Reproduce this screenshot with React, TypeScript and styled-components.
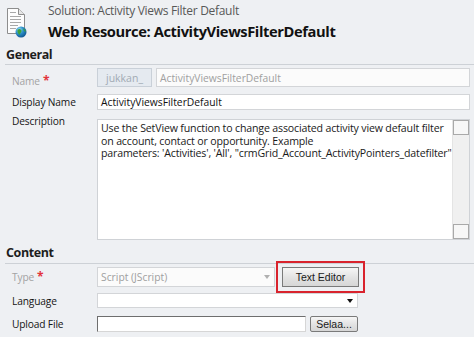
import React from "react";
import styled, { createGlobalStyle } from "styled-components";

const GlobalStyle = createGlobalStyle`
  html, body { margin: 0; padding: 0; background: #eef0f3; }
  body { font-family: "Open Sans", "Noto Sans", sans-serif; color: #222; }
  * { box-sizing: border-box; }
`;

const Page = styled.div`
  width: 474px;
  height: 337px;
  overflow: hidden;
  background: #eef0f3;
`;

const Header = styled.header`
  display: flex;
  align-items: flex-start;
  gap: 20px;
  height: 44px;
  padding: 8px 0 0 6px;
`;

const TitleBlock = styled.div`
  display: flex;
  flex-direction: column;
  margin-top: -5px;
`;

const Subtitle = styled.div`
  font-size: 12px;
  line-height: 16px;
  color: #585858;
  letter-spacing: -0.3px;
`;

const Title = styled.div`
  margin-top: 2px;
  font-size: 14.7px;
  line-height: 20px;
  font-weight: 700;
  color: #111;
  letter-spacing: -0.4px;
`;

const SectionTitle = styled.div<{ $h: number; $pt: number }>`
  height: ${(p) => p.$h}px;
  margin-left: 5px;
  padding: ${(p) => p.$pt}px 0 0 1px;
  border-bottom: 1px solid #cdd1d6;
  font-size: 12.5px;
  line-height: 14px;
  font-weight: 700;
  color: #1e1e1e;
  letter-spacing: -0.4px;
`;

const Row = styled.div<{ $h: number; $mt: number }>`
  display: grid;
  grid-template-columns: 85px 1fr;
  align-items: center;
  height: ${(p) => p.$h}px;
  margin-top: ${(p) => p.$mt}px;
  padding: 0 4px 0 12px;
`;

const Label = styled.div<{ $disabled?: boolean; $align?: string; $mt?: number }>`
  align-self: ${(p) => p.$align || "center"};
  margin-top: ${(p) => p.$mt || 0}px;
  font-size: 10.2px;
  line-height: 12px;
  color: ${(p) => (p.$disabled ? "#a3a3a3" : "#141414")};
  white-space: nowrap;
  letter-spacing: -0.15px;
`;

const Req = styled.span`
  color: #e2343b;
  font-weight: 700;
  margin-left: 3px;
  font-size: 12px;
`;

const Controls = styled.div`
  display: flex;
  align-items: center;
  height: 100%;
`;

const Prefix = styled.div`
  width: 55px;
  height: 100%;
  display: flex;
  align-items: center;
  justify-content: center;
  background: #e5eaf0;
  border: 1px solid #c9d0d8;
  color: #a2aab4;
  font-size: 10.5px;
`;

const Field = styled.div<{ $disabled?: boolean; $w?: number; $ml?: number }>`
  ${(p) => (p.$w ? `width: ${p.$w}px;` : "flex: 1;")}
  margin-left: ${(p) => p.$ml || 0}px;
  height: 100%;
  display: flex;
  align-items: center;
  padding: 0 4px 0 3px;
  background: ${(p) => (p.$disabled ? "#fbfbfb" : "#fff")};
  border: 1px solid #d3d5d8;
  color: ${(p) => (p.$disabled ? "#a0a0a0" : "#111")};
  font-size: 10.3px;
  white-space: nowrap;
  overflow: hidden;
`;

const FieldText = styled.span`
  flex: 1;
`;

const Arrow = styled.span<{ $color: string }>`
  width: 0;
  height: 0;
  border-left: 3px solid transparent;
  border-right: 3px solid transparent;
  border-top: 4px solid ${(p) => p.$color};
`;

const FileField = styled.div`
  width: 209px;
  height: 100%;
  background: #fff;
  border: 1px solid #d6d6d6;
  border-top-color: #6e6e6e;
  border-left-color: #6e6e6e;
`;

const TextArea = styled.div`
  flex: 1;
  height: 100%;
  display: flex;
  background: #fff;
  border: 1px solid #cfd2d6;
`;

const AreaText = styled.div`
  flex: 1;
  min-width: 0;
  padding: 2px 0 0 3px;
  font-size: 10.6px;
  line-height: 12.5px;
  color: #1a1a1a;
  white-space: pre;
  overflow: hidden;
  letter-spacing: -0.16px;
`;

const ScrollTrack = styled.div`
  width: 17px;
  flex-shrink: 0;
  display: flex;
  flex-direction: column;
  justify-content: space-between;
  background: #f0f0f0;
  border-left: 1px solid #e4e4e4;
`;

const ScrollBtn = styled.div`
  width: 16px;
  height: 15px;
  background: #f7f7f7;
  border: 1px solid #a9a9a9;
`;

const Button = styled.button<{ $w: number; $h: number; $ml: number; $highlight?: boolean }>`
  width: ${(p) => p.$w}px;
  height: ${(p) => p.$h}px;
  margin-left: ${(p) => p.$ml}px;
  padding: 0;
  background: linear-gradient(#f6f6f6, #e2e2e2 55%, #d6d6d6);
  border: 1px solid #7a7a7a;
  border-radius: ${(p) => (p.$highlight ? 0 : 2)}px;
  font-family: "Liberation Sans", Arial, sans-serif;
  font-size: 10.5px;
  color: #1a1a1a;
  ${(p) => (p.$highlight ? "outline: 2px solid #d9232d; outline-offset: 4px;" : "")}
`;

const DocIcon = () => (
  <svg width="22" height="30" viewBox="0 0 22 30">
    <defs>
      <radialGradient id="g" cx="0.35" cy="0.3" r="0.8">
        <stop offset="0" stopColor="#9fe0f5" />
        <stop offset="0.45" stopColor="#2a8fc9" />
        <stop offset="1" stopColor="#0d4d86" />
      </radialGradient>
    </defs>
    <path d="M1.5 0.5 H12.5 L18.5 6.5 V25.5 H1.5 Z" fill="#fdfdfd" stroke="#8d8d8d" />
    <path d="M12.5 0.5 V6.5 H18.5" fill="#e6e6e6" stroke="#8d8d8d" />
    <g stroke="#a8a8a8" strokeWidth="1">
      <line x1="4" y1="4.5" x2="10" y2="4.5" />
      <line x1="4" y1="8.5" x2="15" y2="8.5" />
      <line x1="4" y1="11.5" x2="15" y2="11.5" />
      <line x1="4" y1="14.5" x2="15" y2="14.5" />
      <line x1="4" y1="17.5" x2="12" y2="17.5" />
      <line x1="4" y1="20.5" x2="10" y2="20.5" />
    </g>
    <circle cx="15" cy="24" r="5.5" fill="url(#g)" />
    <path d="M11.5 22 C13 20 15 21 15.5 22.5 C16 24 14 25 13.5 27 C12.5 26 11 24 11.5 22 Z" fill="#3ea13a" />
    <path d="M17 20.5 C19 21 20 22.5 19.5 24 C18.5 23.5 17.5 22 17 20.5 Z" fill="#3ea13a" />
  </svg>
);

export default function App() {
  return (
    <>
      <GlobalStyle />
      <Page>
        <Header>
          <DocIcon />
          <TitleBlock>
            <Subtitle>Solution: Activity Views Filter Default</Subtitle>
            <Title>Web Resource: ActivityViewsFilterDefault</Title>
          </TitleBlock>
        </Header>

        <SectionTitle $h={21} $pt={4}>General</SectionTitle>
        <Row $h={19} $mt={3}>
          <Label $disabled $align="end">
            Name<Req>*</Req>
          </Label>
          <Controls>
            <Prefix>jukkan_</Prefix>
            <Field $disabled $ml={4}>ActivityViewsFilterDefault</Field>
          </Controls>
        </Row>
        <Row $h={16} $mt={7}>
          <Label>Display Name</Label>
          <Controls>
            <Field>ActivityViewsFilterDefault</Field>
          </Controls>
        </Row>
        <Row $h={121} $mt={9}>
          <Label $align="start" $mt={-4}>Description</Label>
          <Controls>
            <TextArea>
              <AreaText>
                {"Use the SetView function to change associated activity view default filter\non account, contact or opportunity. Example\nparameters: 'Activities', 'All', \"crmGrid_Account_ActivityPointers_datefilter\""}
              </AreaText>
              <ScrollTrack>
                <ScrollBtn />
                <ScrollBtn />
              </ScrollTrack>
            </TextArea>
          </Controls>
        </Row>

        <SectionTitle $h={24} $pt={6}>Content</SectionTitle>
        <Row $h={18} $mt={3}>
          <Label $disabled>
            Type<Req>*</Req>
          </Label>
          <Controls>
            <Field $disabled $w={178}>
              <FieldText>Script (JScript)</FieldText>
              <Arrow $color="#b0b0b0" />
            </Field>
            <Button $w={77} $h={20} $ml={7} $highlight>Text Editor</Button>
          </Controls>
        </Row>
        <Row $h={15} $mt={8}>
          <Label>Language</Label>
          <Controls>
            <Field $w={261}>
              <FieldText />
              <Arrow $color="#111" />
            </Field>
          </Controls>
        </Row>
        <Row $h={16} $mt={8}>
          <Label>Upload File</Label>
          <Controls>
            <FileField />
            <Button $w={48} $h={16} $ml={4}>Selaa...</Button>
          </Controls>
        </Row>
      </Page>
    </>
  );
}
